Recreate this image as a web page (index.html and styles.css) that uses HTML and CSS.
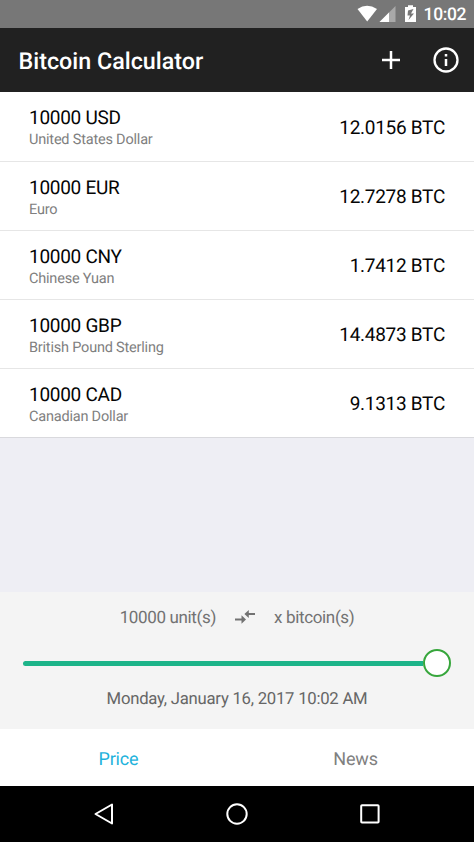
FILE: index.html
```html
<!DOCTYPE html>
<html lang="en">
<head>
<meta charset="utf-8">
<title>Bitcoin Calculator</title>
<link rel="stylesheet" href="styles.css">
</head>
<body>
<div class="statusbar">
  <svg class="status-icons" width="60" height="28" viewBox="0 0 60 28">
    <path d="M0.500 9Q10 2.500 20 9L10.200 21.500Z" fill="#fff"/>
    <path d="M38.500 6V22H22.500Z" fill="#a9a9a9"/>
    <path d="M32 12.500V22H22.500Z" fill="#fff"/>
    <path d="M48 7H51V5.300H56V7H59V22H48Z" fill="#fff"/>
    <path d="M56.500 9L51 10.500L50.500 15.500H53L51.500 20L57 13.600H54Z" fill="#777"/>
  </svg>
  <span class="clock">10:02</span>
</div>
<header class="toolbar">
  <h1>Bitcoin Calculator</h1>
  <svg class="add" width="18" height="18" viewBox="0 0 18 18"><path d="M9 0V18M0 9H18" stroke="#fff" stroke-width="2.500"/></svg>
  <svg class="info" width="26" height="26" viewBox="0 0 26 26"><circle cx="13" cy="13" r="11.500" fill="none" stroke="#fff" stroke-width="2.300"/><path d="M13 12V19M13 7V9.500" stroke="#fff" stroke-width="2.500"/></svg>
</header>
<main class="list">
  <div class="row"><div><div class="code">10000 USD</div><div class="name">United States Dollar</div></div><div class="value">12.0156 BTC</div></div>
  <div class="row"><div><div class="code">10000 EUR</div><div class="name">Euro</div></div><div class="value">12.7278 BTC</div></div>
  <div class="row"><div><div class="code">10000 CNY</div><div class="name">Chinese Yuan</div></div><div class="value">1.7412 BTC</div></div>
  <div class="row"><div><div class="code">10000 GBP</div><div class="name">British Pound Sterling</div></div><div class="value">14.4873 BTC</div></div>
  <div class="row"><div><div class="code">10000 CAD</div><div class="name">Canadian Dollar</div></div><div class="value">9.1313 BTC</div></div>
</main>
<div class="filler"></div>
<section class="panel">
  <div class="units">
    <span>10000 unit(s)</span>
    <svg width="20" height="14" viewBox="0 0 20 14"><path d="M0 8.400H6.500V5.200L11 9.500L6.500 13.800V10.600H0ZM20 2.900H13.800V0L9.400 4L13.800 8V5.100H20Z" fill="#727272"/></svg>
    <span>x bitcoin(s)</span>
  </div>
  <div class="slider"><div class="track"></div><div class="thumb"></div></div>
  <div class="date">Monday, January 16, 2017 10:02 AM</div>
</section>
<nav class="tabs"><span class="tab active">Price</span><span class="tab">News</span></nav>
<footer class="navbar">
  <svg width="20" height="22" viewBox="0 0 20 22"><path d="M18 1.500V20.500L1.500 11Z"/></svg>
  <svg width="22" height="22" viewBox="0 0 22 22"><circle cx="11" cy="11" r="9.700"/></svg>
  <svg width="20" height="20" viewBox="0 0 20 20"><rect x="1.200" y="1.200" width="17.400" height="17.400" rx="0.800"/></svg>
</footer>
</body>
</html>
```

FILE: styles.css
```css
* { box-sizing: border-box; }
body {
  margin: 0;
  width: 474px;
  height: 842px;
  display: flex;
  flex-direction: column;
  overflow: hidden;
  background: #fff;
  font-family: Roboto, "Liberation Sans", sans-serif;
  text-rendering: geometricPrecision;
}
svg { display: block; flex: none; }
.statusbar {
  height: 28px;
  background: #777;
  display: flex;
  justify-content: flex-end;
  align-items: center;
  padding-right: 8px;
}
.status-icons { margin-right: -1px; }
.clock {
  width: 50px;
  padding-top: 2px;
  text-align: right;
  color: #fff;
  font-size: 17.500px;
  font-weight: 500;
  line-height: 28px;
  letter-spacing: -0.400px;
}
.toolbar {
  height: 64px;
  background: #212121;
  display: flex;
  align-items: center;
  padding: 0 15px 0 18.500px;
}
h1 {
  flex: 1;
  margin: 1px 0 0;
  color: #fff;
  font-size: 23.300px;
  line-height: 28px;
  font-weight: 500;
}
.add { margin-right: 33px; }
.list { background: #fff; }
.row {
  height: 69px;
  display: flex;
  justify-content: space-between;
  align-items: center;
  padding: 2px 29px 0;
}
.row + .row { border-top: 1px solid #e6e6e6; }
.row + .row .code { margin-top: 1px; }
.code, .value { color: #050505; font-size: 19px; line-height: 24px; letter-spacing: -0.280px; }
.name { color: #808080; font-size: 14.500px; line-height: 20px; letter-spacing: -0.200px; }
.filler { height: 155px; background: #eeeef4; border-top: 1px solid #d9d9dd; }
.panel { height: 137px; background: #f4f4f4; }
.units {
  display: flex;
  align-items: center;
  justify-content: center;
  gap: 19px;
  padding: 14px 0 0;
  color: #727272;
  font-size: 17px;
  line-height: 22px;
  letter-spacing: -0.350px;
}
.units span { padding-top: 1px; margin-bottom: -1px; }
.slider {
  height: 30px;
  margin: 20px 23px 0;
  display: flex;
  align-items: center;
}
.track { flex: 1; height: 5px; background: #1db489; border-radius: 3px 0 0 3px; }
.thumb { width: 28px; height: 28px; border: 2px solid #37a63c; border-radius: 50%; background: #fff; }
.date { margin-top: 11px; text-align: center; color: #666; font-size: 16.700px; line-height: 22px; letter-spacing: -0.240px; }
.tabs { height: 57px; display: flex; background: #fff; }
.tab { flex: 1; text-align: center; color: #808080; font-size: 18px; line-height: 62px; letter-spacing: -0.150px; }
.active { color: #1fb3dc; }
.navbar {
  height: 56px;
  background: #000;
  display: flex;
  align-items: center;
  justify-content: space-between;
  padding: 0 94px;
}
.navbar svg { fill: none; stroke: #fff; stroke-width: 2; stroke-linejoin: round; }
```
